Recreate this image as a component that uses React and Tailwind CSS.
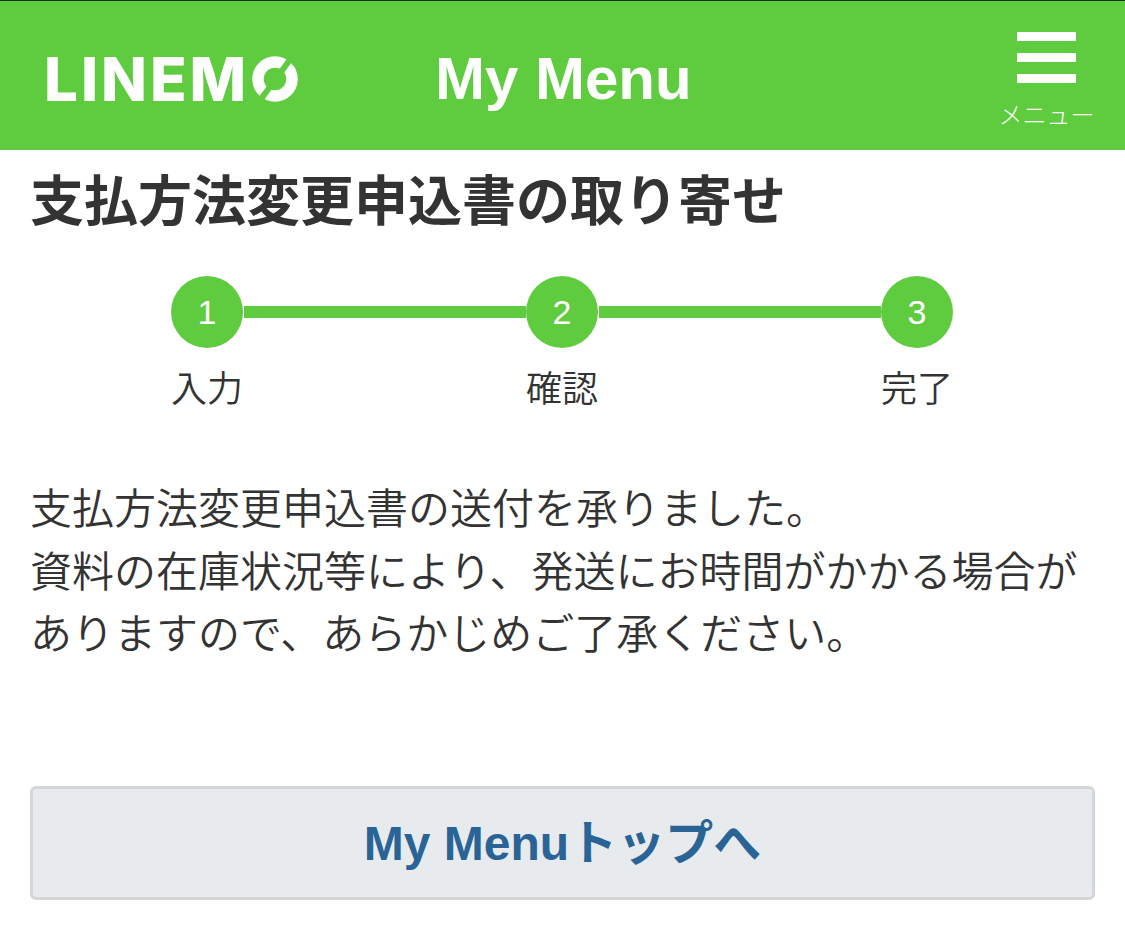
import React from 'react';

const steps = [
  { num: '1', label: '入力' },
  { num: '2', label: '確認' },
  { num: '3', label: '完了' },
];

const LogoMark = () => (
  <svg viewBox="0 0 46 46" className="w-[46px] h-[46px] ml-[3px]">
    <circle cx="23" cy="23" r="17" fill="none" stroke="#fff" strokeWidth="11.5" />
    <path d="M9 43 L40 1" stroke="#5fcc3f" strokeWidth="6" />
  </svg>
);

const StepCircle = ({ step }) => (
  <div className="relative w-[72px] h-[72px] shrink-0 rounded-full bg-[#5fcc3f] flex items-center justify-center text-white text-[34px] font-['Liberation_Sans',sans-serif]">
    {step.num}
    <span className="absolute top-[87px] left-1/2 -translate-x-1/2 whitespace-nowrap text-[36px] leading-[46px] font-[350] text-[#333] font-['Noto_Sans_CJK_JP',sans-serif]">
      {step.label}
    </span>
  </div>
);

export default function App() {
  return (
    <div className="w-[1125px] h-[932px] overflow-hidden bg-white text-[#333] font-['Liberation_Sans','Noto_Sans_CJK_JP',sans-serif]">
      <header className="h-[150px] bg-[#5fcc3f] border-t border-[#1c2b1c] pt-[6px] flex items-center pl-[44px]">
        <div className="w-[391px] flex items-center">
          <span className="font-['Inter',sans-serif] font-extrabold text-[60px] leading-none tracking-[3px] text-white">LINEM</span>
          <LogoMark />
        </div>
        <h2 className="text-[60px] font-bold text-white leading-none">My Menu</h2>
        <div className="ml-auto mr-[25px] w-[107px] flex flex-col items-center pt-[5px]">
          <div className="w-[59px] flex flex-col gap-[12px]">
            <div className="h-[9px] bg-white" />
            <div className="h-[9px] bg-white" />
            <div className="h-[9px] bg-white" />
          </div>
          <span className="text-[24px] leading-[30px] mt-[18px] font-light text-white whitespace-nowrap">メニュー</span>
        </div>
      </header>

      <main className="px-[30px]">
        <h1 className="mt-[20px] text-[54px] leading-[64px] font-bold whitespace-nowrap">支払方法変更申込書の取り寄せ</h1>

        <div className="mt-[42px] ml-[141px] mr-[142px] flex items-center">
          <StepCircle step={steps[0]} />
          <div className="flex-1 h-[12px] ml-[1px] bg-[#5fcc3f]" />
          <StepCircle step={steps[1]} />
          <div className="flex-1 h-[12px] ml-[1px] bg-[#5fcc3f]" />
          <StepCircle step={steps[2]} />
        </div>

        <p className="mt-[131px] text-[42px] leading-[62.5px] font-[350] whitespace-nowrap">
          支払方法変更申込書の送付を承りました。<br />
          資料の在庫状況等により、発送にお時間がかかる場合が<br />
          ありますので、あらかじめご了承ください。
        </p>
      </main>

      <div className="mt-[119px] mx-[30px] h-[114px] pt-[3px] rounded-[6px] border-[3px] border-[#d4d6d8] bg-[#e8ebee] flex items-center justify-center text-[48px] font-bold text-[#2a6496]">
        My Menuトップへ
      </div>
    </div>
  );
}
